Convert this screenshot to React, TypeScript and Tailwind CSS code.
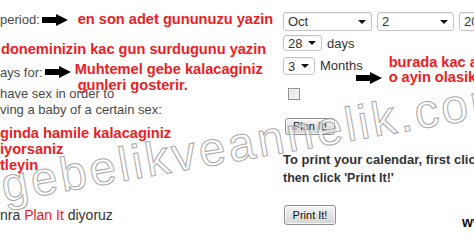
import React from "react";

function Arrow() {
  return (
    <svg width="26" height="12" viewBox="0 0 26 12" className="shrink-0">
      <path d="M0 3 H14 V0 L26 6 L14 12 V9 H0 Z" fill="#000" />
    </svg>
  );
}

function Caret() {
  return (
    <svg width="8" height="4" viewBox="0 0 8 4" className="shrink-0">
      <path d="M0 0 H8 L4 4 Z" fill="#111" />
    </svg>
  );
}

function Select({ value, cls }: { value: string; cls: string }) {
  return (
    <div
      className={`flex items-center justify-between shrink-0 border border-[#c4c4c4] rounded-[3px] bg-white pl-[4px] pr-[5px] text-[13px] leading-none text-[#333] shadow-[inset_0_1px_1px_rgba(0,0,0,0.06)] ${cls}`}
    >
      <span>{value}</span>
      <Caret />
    </div>
  );
}

function Button({ label, cls }: { label: string; cls: string }) {
  return (
    <div
      className={`flex items-center justify-center shrink-0 border border-[#8f8f8f] rounded-[3px] bg-[linear-gradient(#f7f7f7,#e3e3e3_50%,#d5d5d5)] text-[11px] leading-none text-[#111] shadow-[inset_0_0_0_1px_rgba(255,255,255,0.8)] ${cls}`}
    >
      {label}
    </div>
  );
}

export default function App() {
  return (
    <div className="relative w-[474px] h-[248px] overflow-hidden bg-white font-['Liberation_Sans',Arial,sans-serif]">
      <div className="flex">
        {/* Left column */}
        <div className="w-[283px] shrink-0 flex flex-col">
          <div className="h-[40px] flex items-center whitespace-nowrap">
            <span className="text-[13px] text-[#4a4a4a]">period:</span>
            <span className="ml-[2px] flex"><Arrow /></span>
            <span className="ml-[10px] text-[14.6px] font-bold text-[#ee1c24]">en son adet gununuzu yazin</span>
          </div>
          <div className="h-[20px] flex items-center whitespace-nowrap">
            <span className="ml-[1px] text-[14.6px] font-bold text-[#ee1c24]">doneminizin kac gun surdugunu yazin</span>
          </div>
          <div className="h-[26px] flex items-start whitespace-nowrap">
            <span className="mt-[5px] text-[13px] leading-[16px] text-[#4a4a4a]">ays for:</span>
            <span className="mt-[6px] ml-[2px] flex"><Arrow /></span>
            <div className="mt-[1px] ml-[4px] flex flex-col text-[14.6px] leading-[16px] font-bold text-[#ee1c24]">
              <span>Muhtemel gebe kalacaginiz</span>
              <span className="ml-[3px]">gunleri gosterir.</span>
            </div>
          </div>
          <div className="flex flex-col text-[13px] leading-[16px] text-[#4a4a4a] whitespace-nowrap">
            <span>have sex in order to</span>
            <span>ving a baby of a certain sex:</span>
          </div>
          <div className="mt-[7px] flex flex-col text-[14.6px] leading-[16px] font-bold text-[#ee1c24] whitespace-nowrap">
            <span>ginda hamile kalacaginiz</span>
            <span>iyorsaniz</span>
            <span>tleyin</span>
          </div>
          <div className="mt-[33px] text-[14px] leading-[18px] text-[#333] whitespace-nowrap">
            nra <span className="text-[#ee1c24]">Plan It</span> diyoruz
          </div>
        </div>

        {/* Right column */}
        <div className="flex-1 min-w-0 flex flex-col">
          <div className="mt-[12px] flex gap-[5px] overflow-visible">
            <Select value="Oct" cls="w-[89px] h-[19px]" />
            <Select value="2" cls="w-[77px] h-[19px]" />
            <Select value="2011" cls="w-[60px] h-[19px]" />
          </div>
          <div className="mt-[4px] flex items-center">
            <Select value="28" cls="w-[39px] h-[16px]" />
            <span className="ml-[5px] text-[13px] text-[#333] leading-none">days</span>
          </div>
          <div className="mt-[6px] h-[18px] flex items-start whitespace-nowrap">
            <Select value="3" cls="w-[32px] h-[18px]" />
            <span className="ml-[5px] mt-[2px] text-[13px] text-[#333] leading-[14px]">Months</span>
            <span className="-ml-[7px] mt-[15px] flex"><Arrow /></span>
            <div className="-mt-[2px] ml-[7px] flex flex-col text-[14.6px] leading-[15px] font-bold text-[#ee1c24]">
              <span>burada kac ay</span>
              <span>o ayin olasiklari</span>
            </div>
          </div>
          <div className="mt-[13px] ml-[5px] w-[12px] h-[12px] border border-[#8e8f8f] bg-[linear-gradient(135deg,#dedede,#f7f7f7)] shadow-[inset_0_0_0_1px_#f4f4f4]" />
          <div className="mt-[18px] ml-[2px] flex">
            <Button label="Plan It!" cls="w-[50px] h-[17px]" />
          </div>
          <div className="mt-[16px] flex flex-col leading-[18px] font-bold text-[#333] whitespace-nowrap">
            <span className="text-[13px]">To print your calendar, first click</span>
            <span className="text-[12.5px]">then click 'Print It!'</span>
          </div>
          <div className="mt-[18px] ml-[1px] flex items-start whitespace-nowrap">
            <Button label="Print It!" cls="w-[52px] h-[20px]" />
            <span className="ml-[126px] mt-[9px] text-[14px] leading-[16px] font-bold text-[#111]">www</span>
          </div>
        </div>
      </div>

      {/* Watermark */}
      <div className="pointer-events-none absolute left-[-119px] top-[184px] h-[48px] origin-[0_100%] rotate-[-10deg] whitespace-nowrap text-[48px] leading-none tracking-[3px] text-white/50 [-webkit-text-stroke:1px_#a8a8a8]">
        www.gebelikveannelik.com
      </div>
    </div>
  );
}
